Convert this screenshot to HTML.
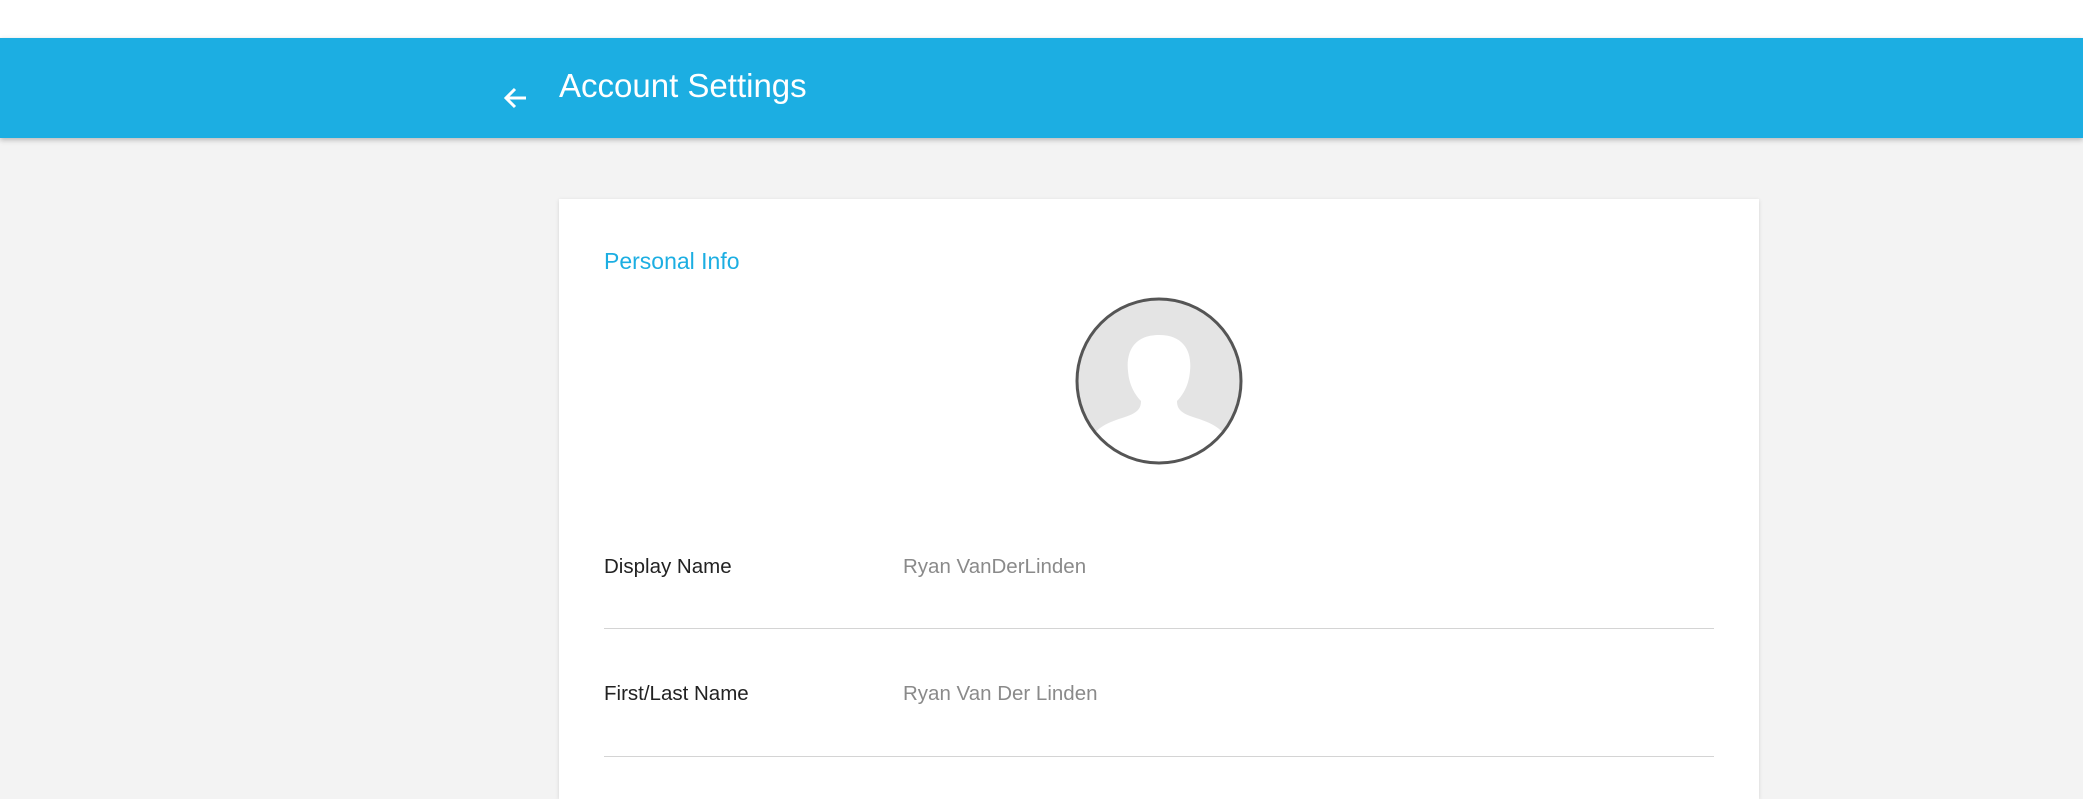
<!DOCTYPE html>
<html><head><style>
body{margin:0;width:2083px;height:786px;background:#f3f3f3;font-family:"Liberation Sans",sans-serif;position:relative;overflow:hidden}
.top{position:absolute;left:0;top:0;width:2083px;height:38px;background:#fff}
.hdr{position:absolute;left:0;top:38px;width:2083px;height:100px;background:#1caee2;box-shadow:0 2px 5px rgba(0,0,0,.25)}
.title{position:absolute;left:559px;top:66px;color:#fff;font-size:33px;line-height:40px}
.card{position:absolute;left:559px;top:199px;width:1200px;height:600px;background:#fff;box-shadow:0 1px 4px rgba(0,0,0,.12)}
.pi{position:absolute;left:604px;top:248px;color:#1caee2;font-size:23px}
.lab{position:absolute;left:604px;font-size:20.5px;color:#222}
.val{position:absolute;left:903px;font-size:20.5px;color:#8a8a8a}
.ln{position:absolute;left:604px;width:1110px;height:1px;background:#d4d4d4}
</style></head><body>
<div class="top"></div>
<div class="hdr"></div>
<svg style="position:absolute;left:502px;top:84px" width="28" height="28" viewBox="0 0 28 28"><path d="M24 14H5M13 5l-9 9 9 9" stroke="#fff" stroke-width="3" fill="none"/></svg>
<div class="title">Account Settings</div>
<div class="card"></div>
<div class="pi">Personal Info</div>
<svg style="position:absolute;left:1073px;top:295px" width="172" height="172" viewBox="0 0 172 172">
<defs><clipPath id="c"><circle cx="86" cy="86" r="82"/></clipPath></defs>
<circle cx="86" cy="86" r="82" fill="#e4e4e4"/>
<g clip-path="url(#c)"><path d="M86 40c-26 0-33 18-31 36 1 14 7 24 13 30 0 8-4 12-16 16-16 5-28 10-32 20l-4 40h140l-4-40c-4-10-16-15-32-20-12-4-16-8-16-16 6-6 12-16 13-30 2-18-5-36-31-36z" fill="#fff"/></g>
<circle cx="86" cy="86" r="82" fill="none" stroke="#555" stroke-width="3"/>
</svg>
<div class="lab" style="top:555px">Display Name</div>
<div class="val" style="top:555px">Ryan VanDerLinden</div>
<div class="ln" style="top:628px"></div>
<div class="lab" style="top:682px">First/Last Name</div>
<div class="val" style="top:682px">Ryan Van Der Linden</div>
<div class="ln" style="top:756px"></div>
</body></html>
